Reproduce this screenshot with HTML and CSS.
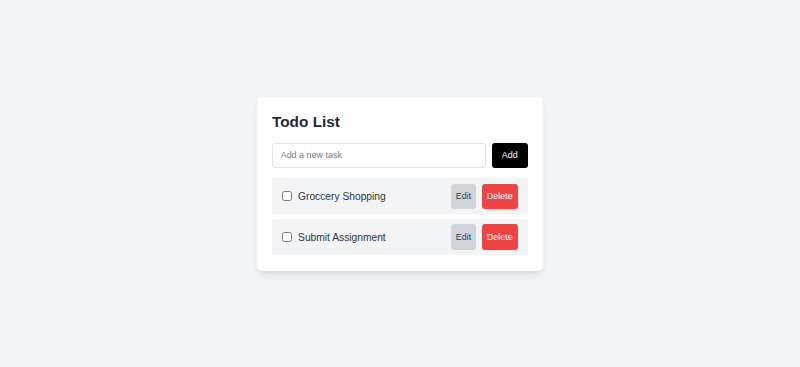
FILE: index.html
```html
<!DOCTYPE html>
<html lang="en">
<head>
<meta charset="utf-8">
<title>Todo List</title>
<link rel="stylesheet" href="styles.css">
</head>
<body>
<main class="page">
  <section class="card">
    <h1 class="title">Todo List</h1>
    <form class="add-row" onsubmit="return false">
      <input class="task-input" type="text" placeholder="Add a new task">
      <button class="btn btn-add" type="submit">Add</button>
    </form>
    <ul class="list">
      <li class="item">
        <label class="item-label">
          <input class="check" type="checkbox">
          <span class="item-text">Groccery Shopping</span>
        </label>
        <div class="actions">
          <button class="btn btn-edit" type="button">Edit</button>
          <button class="btn btn-delete" type="button">Delete</button>
        </div>
      </li>
      <li class="item">
        <label class="item-label">
          <input class="check" type="checkbox">
          <span class="item-text">Submit Assignment</span>
        </label>
        <div class="actions">
          <button class="btn btn-edit" type="button">Edit</button>
          <button class="btn btn-delete" type="button">Delete</button>
        </div>
      </li>
    </ul>
  </section>
</main>
</body>
</html>
```

FILE: styles.css
```css
* {
  box-sizing: border-box;
}

html, body {
  margin: 0;
  padding: 0;
}

body {
  background: #f3f4f6;
  font-family: "Liberation Sans", Arial, sans-serif;
  color: #1f2937;
}

.page {
  min-height: 100vh;
  display: flex;
  align-items: center;
  justify-content: center;
}

.card {
  width: 286.72px;
  background: #ffffff;
  border-radius: 5.12px;
  padding: 15.36px;
  box-shadow: 0 6px 10px -2px rgba(0, 0, 0, 0.09), 0 2px 5px -2px rgba(0, 0, 0, 0.08);
}

.title {
  margin: 0 0 10.24px;
  font-size: 15.36px;
  line-height: 20.48px;
  font-weight: 700;
  color: #1f2937;
}

.add-row {
  display: flex;
  gap: 5.6px;
  margin: 0 0 10.24px;
}

.task-input {
  flex: 1;
  min-width: 0;
  height: 25.6px;
  padding: 0 7.68px;
  border: 1px solid #e2e4e8;
  border-radius: 3px;
  font-family: inherit;
  font-size: 8.96px;
  color: #1f2937;
  outline: none;
}

.task-input::placeholder {
  color: #777a7f;
}

.btn {
  height: 25.6px;
  border: 0;
  border-radius: 3px;
  font-family: inherit;
  font-size: 8.96px;
  line-height: 12.8px;
  cursor: pointer;
}

.btn-add {
  background: #000000;
  color: #ffffff;
  padding: 0 10.24px;
}

.list {
  list-style: none;
  margin: 0;
  padding: 0;
  display: flex;
  flex-direction: column;
  gap: 5.12px;
}

.item {
  display: flex;
  align-items: center;
  justify-content: space-between;
  background: #f3f4f6;
  border-radius: 3px;
  padding: 5.12px 10.24px;
}

.item-label {
  display: flex;
  align-items: center;
  gap: 5.6px;
}

.check {
  width: 10.24px;
  height: 10.24px;
  margin: 0;
}

.item-text {
  font-size: 10.24px;
  line-height: 15.36px;
  color: #2d3440;
}

.actions {
  display: flex;
  gap: 5.3px;
}

.btn-edit {
  background: #d1d5db;
  color: #374151;
  padding: 0 5.12px;
}

.btn-delete {
  background: #ef4444;
  color: #ffffff;
  padding: 0 5.12px;
}
```
